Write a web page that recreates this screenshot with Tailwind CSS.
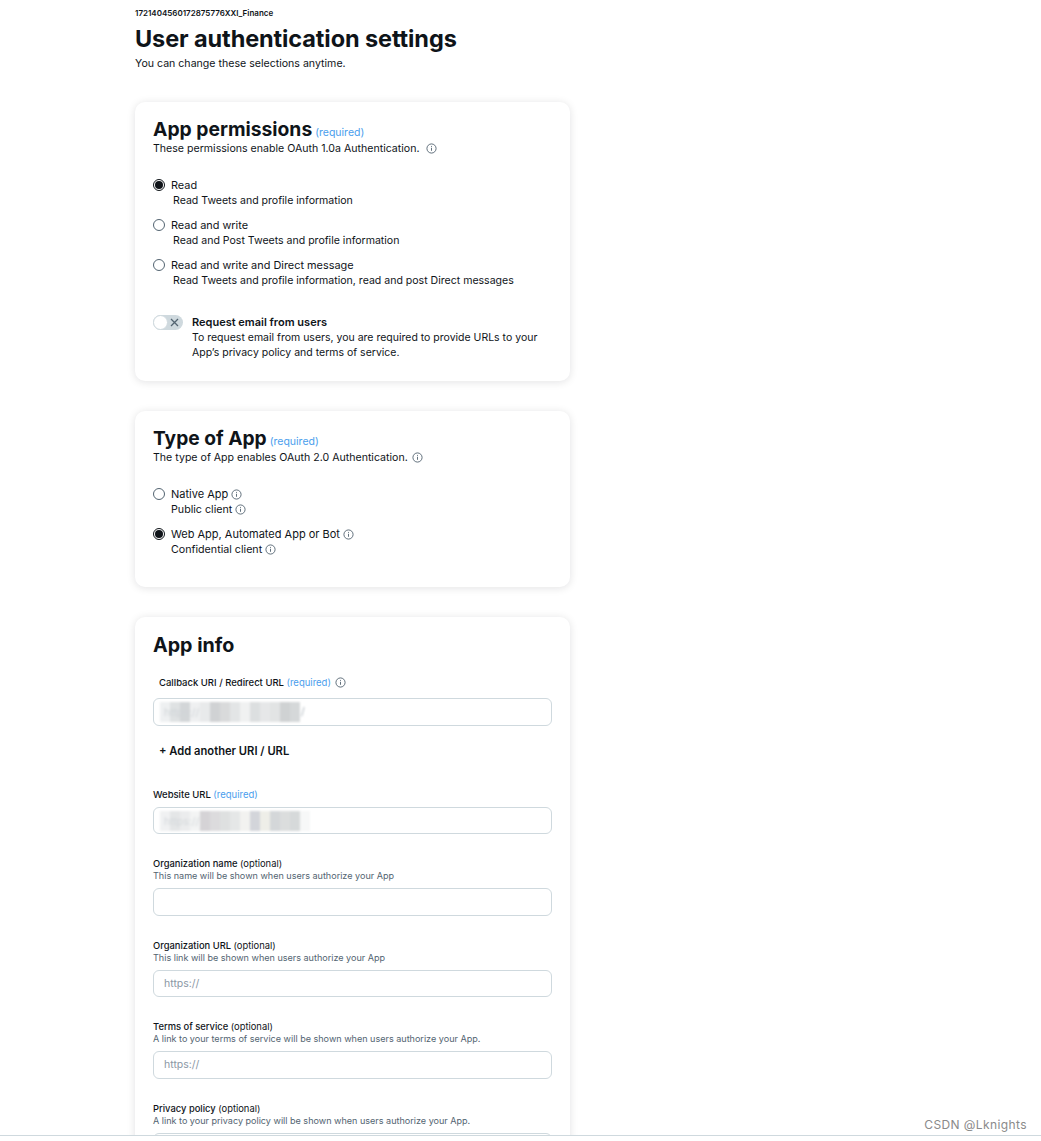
<!DOCTYPE html>
<html lang="en">
<head>
  <meta charset="UTF-8" />
  <title>User authentication settings</title>
  <script src="https://cdn.jsdelivr.net/npm/@tailwindcss/browser@4"></script>
</head>
<body class="bg-white font-['Inter',sans-serif] text-[#0f1419] overflow-hidden relative h-[1141px]">
  <div class="h-[1136px] overflow-hidden border-b border-[#cfd9de] pl-[135px]">
    <div class="w-[435px]">
      <p class="pt-[8px] text-[8px] leading-[10px] font-semibold">1721404560172875776XXI_Finance</p>
      <h1 class="mt-[6px] text-[23.5px] leading-[30px] font-bold tracking-[-0.1px]">User authentication settings</h1>
      <p class="mt-[2px] text-[10.6px] leading-[15px]">You can change these selections anytime.</p>

      <section class="mt-[31px] h-[279px] bg-white rounded-[10px] shadow-[0_1px_8px_rgba(15,20,25,0.12)] pt-[16px] px-[18px]">
        <div class="flex items-baseline gap-[3px]">
          <h2 class="text-[19.3px] leading-[22px] font-bold">App permissions</h2>
          <span class="text-[10.5px] text-[#4a9eed]">(required)</span>
        </div>
        <p class="text-[10.6px] leading-[15px] flex items-center gap-[6px]">These permissions enable OAuth 1.0a Authentication.
          <svg class="w-[11px] h-[11px]" viewBox="0 0 12 12" fill="none" stroke="#536471"><circle cx="6" cy="6" r="5"/><path d="M6 5.2v3.3M6 3.2v1"/></svg>
        </p>

        <div class="mt-[22px] flex flex-col gap-[10px]">
          <div>
            <div class="flex items-center gap-[6px] text-[10.9px] leading-[15px]">
              <span class="w-[12px] h-[12px] rounded-full border border-[#0f1419] flex items-center justify-center"><span class="w-[8px] h-[8px] rounded-full bg-[#0f1419]"></span></span>
              Read
            </div>
            <p class="pl-[20px] text-[10.55px] leading-[15px]">Read Tweets and profile information</p>
          </div>
          <div>
            <div class="flex items-center gap-[6px] text-[10.9px] leading-[15px]">
              <span class="w-[12px] h-[12px] rounded-full border border-[#536471]"></span>
              Read and write
            </div>
            <p class="pl-[20px] text-[10.55px] leading-[15px]">Read and Post Tweets and profile information</p>
          </div>
          <div>
            <div class="flex items-center gap-[6px] text-[10.9px] leading-[15px]">
              <span class="w-[12px] h-[12px] rounded-full border border-[#536471]"></span>
              Read and write and Direct message
            </div>
            <p class="pl-[20px] text-[10.55px] leading-[15px]">Read Tweets and profile information, read and post Direct messages</p>
          </div>
        </div>

        <div class="mt-[27px] flex gap-[9px]">
          <div class="relative w-[30px] h-[15px] rounded-full bg-[#cfd9de] shrink-0">
            <span class="absolute left-0 top-0 w-[15px] h-[15px] rounded-full bg-white border border-[#cfd9de]"></span>
            <svg class="absolute right-[4px] top-[3px] w-[9px] h-[9px]" viewBox="0 0 9 9" fill="none" stroke="#536471" stroke-width="1.3"><path d="M1 1l7 7M8 1l-7 7"/></svg>
          </div>
          <div class="text-[10.5px] leading-[15px]">
            <p class="text-[11px] font-semibold">Request email from users</p>
            <p>To request email from users, you are required to provide URLs to your App’s privacy policy and terms of service.</p>
          </div>
        </div>
      </section>

      <section class="mt-[30px] h-[176px] bg-white rounded-[10px] shadow-[0_1px_8px_rgba(15,20,25,0.12)] pt-[16px] px-[18px]">
        <div class="flex items-baseline gap-[3px]">
          <h2 class="text-[19.2px] leading-[22px] font-bold">Type of App</h2>
          <span class="text-[10.5px] text-[#4a9eed]">(required)</span>
        </div>
        <p class="text-[10.6px] leading-[15px] flex items-center gap-[4px]">The type of App enables OAuth 2.0 Authentication.
          <svg class="w-[11px] h-[11px]" viewBox="0 0 12 12" fill="none" stroke="#536471"><circle cx="6" cy="6" r="5"/><path d="M6 5.2v3.3M6 3.2v1"/></svg>
        </p>

        <div class="mt-[22px] flex flex-col gap-[10px]">
          <div>
            <div class="flex items-center gap-[6px] text-[11px] leading-[15px]">
              <span class="w-[12px] h-[12px] rounded-full border border-[#536471]"></span>
              Native App
              <svg class="w-[11px] h-[11px] -ml-[3px]" viewBox="0 0 12 12" fill="none" stroke="#536471"><circle cx="6" cy="6" r="5"/><path d="M6 5.2v3.3M6 3.2v1"/></svg>
            </div>
            <p class="pl-[18px] text-[10.7px] leading-[15px] flex items-center gap-[3px]">Public client
              <svg class="w-[11px] h-[11px]" viewBox="0 0 12 12" fill="none" stroke="#536471"><circle cx="6" cy="6" r="5"/><path d="M6 5.2v3.3M6 3.2v1"/></svg>
            </p>
          </div>
          <div>
            <div class="flex items-center gap-[6px] text-[11px] leading-[15px]">
              <span class="w-[12px] h-[12px] rounded-full border border-[#0f1419] flex items-center justify-center"><span class="w-[8px] h-[8px] rounded-full bg-[#0f1419]"></span></span>
              Web App, Automated App or Bot
              <svg class="w-[11px] h-[11px] -ml-[3px]" viewBox="0 0 12 12" fill="none" stroke="#536471"><circle cx="6" cy="6" r="5"/><path d="M6 5.2v3.3M6 3.2v1"/></svg>
            </div>
            <p class="pl-[18px] text-[10.7px] leading-[15px] flex items-center gap-[3px]">Confidential client
              <svg class="w-[11px] h-[11px]" viewBox="0 0 12 12" fill="none" stroke="#536471"><circle cx="6" cy="6" r="5"/><path d="M6 5.2v3.3M6 3.2v1"/></svg>
            </p>
          </div>
        </div>
      </section>

      <section class="mt-[30px] h-[600px] bg-white rounded-[10px] shadow-[0_1px_8px_rgba(15,20,25,0.12)] pt-[17px] px-[18px]">
        <h2 class="text-[19.7px] leading-[22px] font-bold">App info</h2>

        <p class="mt-[20px] pl-[6px] text-[9.5px] leading-[13px] font-medium flex items-center">Callback URI / Redirect URL&nbsp;<span class="font-normal text-[#4a9eed]">(required)</span>
          <svg class="ml-[4px] w-[11px] h-[11px]" viewBox="0 0 12 12" fill="none" stroke="#536471"><circle cx="6" cy="6" r="5"/><path d="M6 5.2v3.3M6 3.2v1"/></svg>
        </p>
        <div class="mt-[9px] h-[28px] border border-[#cfd9de] rounded-[6px] pl-[6px] flex items-center">
          <div class="relative flex items-center blur-[1px]">
            <div class="h-[20px] w-[10px] bg-[#eef0f1]"></div><div class="h-[20px] w-[10px] bg-[#dfe2e3]"></div><div class="h-[20px] w-[10px] bg-[#d3d6d8]"></div><div class="h-[20px] w-[10px] bg-[#eff0f1]"></div><div class="h-[20px] w-[10px] bg-[#e8eaeb]"></div><div class="h-[20px] w-[10px] bg-[#d0d2d4]"></div><div class="h-[20px] w-[10px] bg-[#d9dadb]"></div><div class="h-[20px] w-[10px] bg-[#e3e5e6]"></div><div class="h-[20px] w-[10px] bg-[#f0f1f1]"></div><div class="h-[20px] w-[10px] bg-[#dcdfe0]"></div><div class="h-[20px] w-[10px] bg-[#e6e7e8]"></div><div class="h-[20px] w-[10px] bg-[#e2e4e4]"></div><div class="h-[20px] w-[10px] bg-[#cfd2d3]"></div><div class="h-[20px] w-[10px] bg-[#d5d8d9]"></div>
            <span class="ml-[1px] text-[10.5px] text-[#aab3ba]">/</span>
            <span class="absolute left-[4px] top-[3px] text-[10.5px] leading-[15px] text-[#d0d5d8]">https://</span>
          </div>
        </div>

        <p class="mt-[18px] pl-[6px] text-[11.2px] leading-[15px] font-semibold">+ Add another URI / URL</p>

        <p class="mt-[29px] text-[9.5px] leading-[13px] font-medium">Website URL <span class="font-normal text-[#4a9eed]">(required)</span></p>
        <div class="relative mt-[6px] h-[27px] border border-[#cfd9de] rounded-[6px] pl-[6px] flex items-center">
          <div class="relative flex items-center blur-[1px]">
            <div class="h-[20px] w-[10px] bg-[#f0f1f2]"></div><div class="h-[20px] w-[10px] bg-[#e4e6e7]"></div><div class="h-[20px] w-[10px] bg-[#ebeced]"></div><div class="h-[20px] w-[10px] bg-[#f3f4f4]"></div><div class="h-[20px] w-[10px] bg-[#d5d3d6]"></div><div class="h-[20px] w-[10px] bg-[#dcdbdd]"></div><div class="h-[20px] w-[10px] bg-[#dee0e0]"></div><div class="h-[20px] w-[10px] bg-[#e5e7e7]"></div><div class="h-[20px] w-[10px] bg-[#f2f2f0]"></div><div class="h-[20px] w-[10px] bg-[#d3d5da]"></div><div class="h-[20px] w-[10px] bg-[#eeeee8]"></div><div class="h-[20px] w-[10px] bg-[#d4d7d9]"></div><div class="h-[20px] w-[10px] bg-[#dbdddd]"></div><div class="h-[20px] w-[10px] bg-[#d6d9da]"></div><div class="h-[20px] w-[10px] bg-[#f7f8f8]"></div>
            <span class="absolute left-[4px] top-[3px] text-[10.5px] leading-[15px] text-[#d4d8db]">https://</span>
          </div>
        </div>

        <p class="mt-[24px] text-[9.4px] leading-[12px] font-medium">Organization name <span class="font-normal">(optional)</span></p>
        <p class="text-[9.05px] leading-[12px] text-[#536471]">This name will be shown when users authorize your App</p>
        <div class="mt-[6px] h-[28px] border border-[#cfd9de] rounded-[6px]"></div>

        <p class="mt-[24px] text-[9.4px] leading-[12px] font-medium">Organization URL <span class="font-normal">(optional)</span></p>
        <p class="text-[9.05px] leading-[12px] text-[#536471]">This link will be shown when users authorize your App</p>
        <div class="mt-[6px] h-[27px] border border-[#cfd9de] rounded-[6px] pl-[10px] flex items-center text-[10.5px] text-[#8b98a5]">https://</div>

        <p class="mt-[24px] text-[9.4px] leading-[12px] font-medium">Terms of service <span class="font-normal">(optional)</span></p>
        <p class="text-[9.05px] leading-[12px] text-[#536471]">A link to your terms of service will be shown when users authorize your App.</p>
        <div class="mt-[6px] h-[28px] border border-[#cfd9de] rounded-[6px] pl-[10px] flex items-center text-[10.5px] text-[#8b98a5]">https://</div>

        <p class="mt-[24px] text-[9.4px] leading-[12px] font-medium">Privacy policy <span class="font-normal">(optional)</span></p>
        <p class="text-[9.05px] leading-[12px] text-[#536471]">A link to your privacy policy will be shown when users authorize your App.</p>
        <div class="mt-[6px] h-[28px] border border-[#cfd9de] rounded-[6px]"></div>
      </section>
    </div>
  </div>
  <span class="absolute right-[14px] top-[1117px] text-[12px] leading-[15px] tracking-[0.4px] text-[#8a8a8a]">CSDN @Lknights</span>
</body>
</html>
